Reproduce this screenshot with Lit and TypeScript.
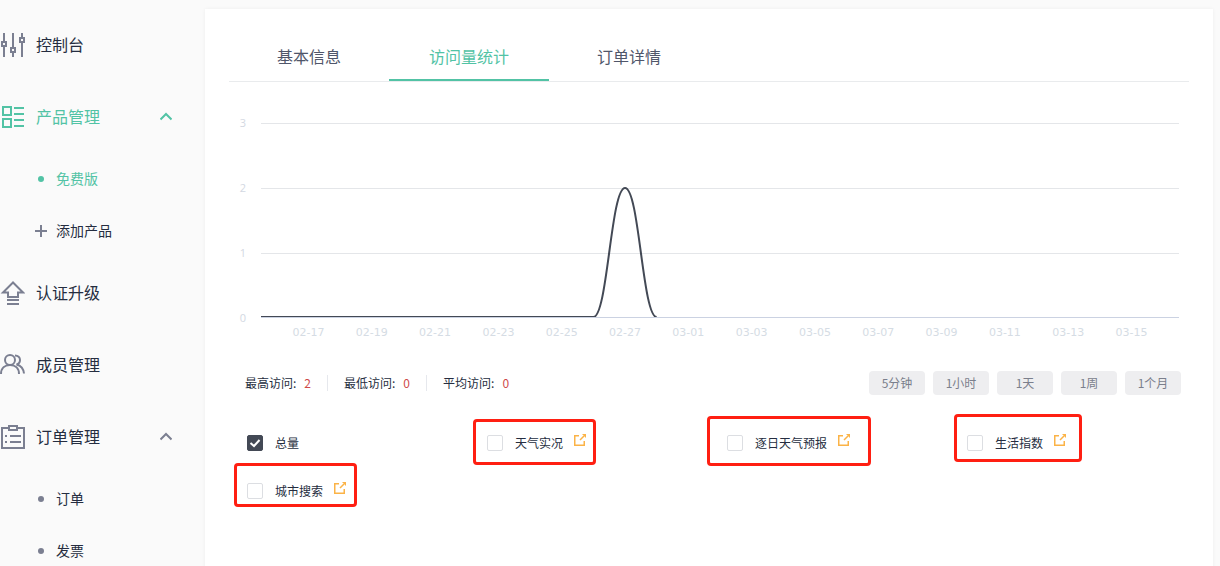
import { LitElement, html, css, svg, nothing } from "lit";
import { customElement, property, state } from "lit/decorators.js";
import { classMap } from "lit/directives/class-map.js";
import { styleMap } from "lit/directives/style-map.js";

const icons = {
  sliders: svg`<path d="M4 0v8.5M4 13.5V24M13 0v14.5M13 19.5V24M22 0v4.5M22 9.5V24"/><path d="M2 9h4v4H2zM11 15h4v4h-4zM20 5h4v4h-4z"/>`,
  list: svg`<path d="M3 2h8v8H3zM3 14h8v8H3zM14 3h10M14 9h10M14 15h10M14 21h10"/>`,
  upgrade: svg`<path d="M13 1.500 3 11.500h5V16h10v-4.500h5zM7 19h12M7 23h12"/>`,
  members: svg`<circle cx="10" cy="7" r="5"/><path d="M1 21c0-6 4-9 9-9s9 3 9 9M15 2.500c3 0 5 2 5 4.500s-1.500 4-3.500 4.500c4 1 7 4.500 7.500 9"/>`,
  clipboard: svg`<path d="M8 3H2v20h22V3h-6M9 1h8v4H9zM10 11h11M10 17h11M5 11h2M5 17h2"/>`,
};

type IconName = keyof typeof icons;

interface SubItem {
  label: string;
  marker: "dot" | "plus";
  active?: boolean;
}

interface MenuItem {
  label: string;
  icon: IconName;
  active?: boolean;
  children?: SubItem[];
}

const menu: MenuItem[] = [
  { label: "控制台", icon: "sliders" },
  {
    label: "产品管理",
    icon: "list",
    active: true,
    children: [
      { label: "免费版", marker: "dot", active: true },
      { label: "添加产品", marker: "plus" },
    ],
  },
  { label: "认证升级", icon: "upgrade" },
  { label: "成员管理", icon: "members" },
  {
    label: "订单管理",
    icon: "clipboard",
    children: [
      { label: "订单", marker: "dot" },
      { label: "发票", marker: "dot" },
    ],
  },
];

@customElement("side-menu")
export class SideMenu extends LitElement {
  static styles = css`
    :host {
      display: block;
    }
    .list {
      margin: 0;
      padding: 0;
      list-style: none;
    }
    .entry,
    .sub {
      box-sizing: border-box;
      width: 100%;
      display: flex;
      align-items: center;
      border: 0;
      background: none;
      color: #252d40;
      font-family: inherit;
      text-align: left;
      text-decoration: none;
      cursor: pointer;
    }
    .entry {
      height: 72px;
      padding: 0 33px 0 0;
      gap: 11px;
      font-size: 16px;
    }
    .sub {
      height: 52px;
      padding: 0 0 0 35px;
      gap: 9px;
      font-size: 14px;
    }
    .active {
      color: #52c3a5;
    }
    .label {
      flex: 1;
      padding-bottom: 2px;
    }
    .icon {
      width: 25px;
      height: 24px;
      fill: none;
      stroke: #7b7f91;
      stroke-width: 2;
    }
    .small {
      width: 12px;
      height: 12px;
      fill: none;
      stroke: #7b7f91;
      stroke-width: 2;
    }
    .dot {
      fill: #7b7f91;
      stroke: none;
    }
    .active .icon,
    .active .small {
      stroke: #52c3a5;
    }
    .active .dot {
      fill: #52c3a5;
    }
  `;

  @state() private closed = new Set<string>();

  private toggle(label: string) {
    const next = new Set(this.closed);
    if (!next.delete(label)) next.add(label);
    this.closed = next;
  }

  private renderSub(item: SubItem) {
    return html`<li>
      <a class=${classMap({ sub: true, active: !!item.active })} href="#">
        <svg class="small" viewBox="0 0 12 12" aria-hidden="true">
          ${item.marker === "dot"
            ? svg`<circle class="dot" cx="6" cy="6" r="3"/>`
            : svg`<path d="M0 6h12M6 0v12"/>`}
        </svg>
        <span class="label">${item.label}</span>
      </a>
    </li>`;
  }

  private renderItem(item: MenuItem) {
    const classes = classMap({ entry: true, active: !!item.active });
    const content = html`<svg class="icon" viewBox="0 0 25 24" aria-hidden="true">${icons[item.icon]}</svg>
      <span class="label">${item.label}</span>`;
    if (!item.children) {
      return html`<li><a class=${classes} href="#">${content}</a></li>`;
    }
    const open = !this.closed.has(item.label);
    return html`<li>
      <button class=${classes} type="button" aria-expanded=${open} @click=${() => this.toggle(item.label)}>
        ${content}
        <svg class="small" viewBox="0 0 12 12" aria-hidden="true">
          <path d=${open ? "M0.500 8.500 6 3 11.500 8.500" : "M0.500 3.500 6 9 11.500 3.500"} />
        </svg>
      </button>
      ${open ? html`<ul class="list">${item.children.map((c) => this.renderSub(c))}</ul>` : nothing}
    </li>`;
  }

  render() {
    return html`<nav><ul class="list">${menu.map((item) => this.renderItem(item))}</ul></nav>`;
  }
}

@customElement("visit-chart")
export class VisitChart extends LitElement {
  static styles = css`
    :host {
      display: block;
    }
    .chart {
      display: grid;
      grid-template-columns: 17px minmax(0, 1fr);
      column-gap: 15px;
      padding-right: 10px;
    }
    .values {
      display: flex;
      flex-direction: column;
      justify-content: space-between;
      margin: -8px 0;
      text-align: right;
      font: 11px/16px "Open Sans", sans-serif;
      color: #d3d8e2;
    }
    .plot {
      display: block;
      width: 100%;
      height: 195px;
      overflow: visible;
    }
    .grid,
    .axis,
    .curve {
      fill: none;
      vector-effect: non-scaling-stroke;
    }
    .grid {
      stroke: #e4e6e9;
    }
    .axis {
      stroke: #cbd2e2;
    }
    .curve {
      stroke: #434955;
      stroke-width: 2;
    }
    .dates {
      grid-column: 2;
      display: grid;
      grid-template-columns: 1fr repeat(14, minmax(0, 4fr)) 1fr;
      padding-top: 7px;
      font: 11px/16px "DejaVu Sans", sans-serif;
      color: #d5dce4;
      text-align: center;
      white-space: nowrap;
    }
    .dates::before {
      content: "";
    }
  `;

  @property({ attribute: false }) dates: string[] = [];

  render() {
    return html`<div class="chart">
      <div class="values">${[3, 2, 1, 0].map((v) => html`<span>${v}</span>`)}</div>
      <svg class="plot" viewBox="0 0 29 195" preserveAspectRatio="none" role="img" aria-label="访问量统计">
        <path class="grid" d="M0 0.500H29M0 65.500H29M0 130.500H29" />
        <path class="curve" d="M0 194H10.500C10.950 194 11.050 65 11.500 65S12.050 194 12.500 194" />
        <path class="axis" d="M0 194.500H29" />
      </svg>
      <div class="dates">${this.dates.map((d) => html`<span>${d}</span>`)}</div>
    </div>`;
  }
}

interface Option {
  label: string;
  checked?: boolean;
  link?: boolean;
  /** Highlight frame around the option, relative to its cell. */
  frame?: { left: number; top: number; width: number; height: number };
}

const options: Option[] = [
  { label: "总量", checked: true },
  { label: "天气实况", link: true, frame: { left: 4, top: 0, width: 123, height: 46 } },
  { label: "逐日天气预报", link: true, frame: { left: -2, top: -3, width: 164, height: 50 } },
  { label: "生活指数", link: true, frame: { left: 5, top: -5, width: 128, height: 48 } },
  { label: "城市搜索", link: true, frame: { left: 5, top: -4, width: 123, height: 44 } },
];

@customElement("app-root")
export class AppRoot extends LitElement {
  static styles = css`
    :host {
      display: grid;
      grid-template-columns: 205px minmax(0, 1fr);
      box-sizing: border-box;
      height: 100vh;
      overflow: hidden;
      padding: 9px 7px 0 0;
      background: #fafafa;
      color: #252d40;
      font-family: "Noto Sans CJK SC", sans-serif;
    }
    .card {
      padding: 24px 24px 0;
      background: #fff;
      box-shadow: 0 0 4px rgba(0, 0, 0, 0.05);
    }
    .tabs {
      display: flex;
      border-bottom: 1px solid #e9ebed;
    }
    .tab {
      box-sizing: border-box;
      width: 160px;
      height: 48px;
      padding: 0;
      border: 0;
      border-bottom: 2px solid transparent;
      background: none;
      color: #50566a;
      font: 16px/24px "Noto Sans CJK SC", sans-serif;
      cursor: pointer;
    }
    .selected {
      border-bottom-color: #52c3a5;
      color: #52c3a5;
    }
    .visits {
      padding-top: 41px;
    }
    .summary {
      display: flex;
      justify-content: space-between;
      align-items: center;
      padding: 30px 8px 24px 0;
      font-size: 12px;
      line-height: 16px;
    }
    .stats,
    .ranges {
      display: flex;
      margin: 0;
    }
    .stat {
      display: flex;
      gap: 8px;
      padding: 0 16px;
      border-right: 1px solid #e6e8ed;
    }
    .stat:last-child {
      border-right: 0;
    }
    .number {
      margin: 0;
      color: #cf4a4a;
    }
    .ranges {
      gap: 8px;
    }
    .range {
      width: 56px;
      height: 24px;
      padding: 0;
      border: 0;
      border-radius: 4px;
      background: #eeeef0;
      color: #7b7f8c;
      font: 12px/24px "Noto Sans CJK SC", sans-serif;
      cursor: pointer;
    }
    .options {
      display: grid;
      grid-template-columns: repeat(4, minmax(0, 1fr));
      margin: 0;
      padding: 0;
      list-style: none;
    }
    .option {
      position: relative;
      display: flex;
      align-items: center;
      gap: 11px;
      height: 48px;
      padding-left: 18px;
      font-size: 12px;
      line-height: 16px;
    }
    .check {
      display: flex;
      align-items: center;
      gap: 12px;
      cursor: pointer;
    }
    .box {
      display: grid;
    }
    .input,
    .tick {
      grid-area: 1 / 1;
      width: 16px;
      height: 16px;
    }
    .input {
      appearance: none;
      box-sizing: border-box;
      margin: 0;
      border: 1px solid #dcdee2;
      border-radius: 2px;
      background: #fff;
    }
    .input:checked {
      border-color: #434955;
      background: #434955;
    }
    .tick {
      fill: none;
      stroke: #fff;
      stroke-width: 2;
      pointer-events: none;
    }
    .link {
      display: flex;
      padding-bottom: 6px;
    }
    .open {
      width: 12px;
      height: 12px;
      fill: none;
      stroke: #fbb347;
      stroke-width: 1.5;
    }
    .tip {
      fill: #fbb347;
      stroke: none;
    }
    .frame {
      position: absolute;
      box-sizing: border-box;
      border: 3px solid #ff1f12;
      border-radius: 4px;
      pointer-events: none;
    }
  `;

  @state() private tab = "访问量统计";

  private renderTab(label: string) {
    const selected = this.tab === label;
    return html`<button
      class=${classMap({ tab: true, selected })}
      type="button"
      role="tab"
      aria-selected=${selected}
      @click=${() => (this.tab = label)}
    >${label}</button>`;
  }

  private renderOption(option: Option) {
    const f = option.frame;
    return html`<li class="option">
      <label class="check">
        <span class="box">
          <input class="input" type="checkbox" .checked=${!!option.checked} />
          <svg class="tick" viewBox="0 0 16 16" aria-hidden="true"><path d="M3.500 8 7 11 12.500 5" /></svg>
        </span>
        <span>${option.label}</span>
      </label>
      ${option.link
        ? html`<a class="link" href="#" aria-label=${option.label}>
            <svg class="open" viewBox="0 0 12 12" aria-hidden="true">
              <path d="M5 1.750H0.750v9.500h9.500V7M6 6l4-4" />
              <path class="tip" d="M8 0h4v4z" />
            </svg>
          </a>`
        : nothing}
      ${f
        ? html`<span
            class="frame"
            style=${styleMap({
              left: `${f.left}px`,
              top: `${f.top}px`,
              width: `${f.width}px`,
              height: `${f.height}px`,
            })}
          ></span>`
        : nothing}
    </li>`;
  }

  render() {
    const stats: [string, number][] = [["最高访问:", 2], ["最低访问:", 0], ["平均访问:", 0]];
    const dates = [
      "02-17", "02-19", "02-21", "02-23", "02-25", "02-27", "03-01",
      "03-03", "03-05", "03-07", "03-09", "03-11", "03-13", "03-15",
    ];
    return html`
      <side-menu></side-menu>
      <main class="card">
        <div class="tabs" role="tablist">
          ${["基本信息", "访问量统计", "订单详情"].map((t) => this.renderTab(t))}
        </div>
        <section class="visits">
          <visit-chart .dates=${dates}></visit-chart>
          <div class="summary">
            <dl class="stats">
              ${stats.map(([name, value]) => html`<div class="stat"><dt>${name}</dt><dd class="number">${value}</dd></div>`)}
            </dl>
            <div class="ranges">
              ${["5分钟", "1小时", "1天", "1周", "1个月"].map((r) => html`<button class="range" type="button">${r}</button>`)}
            </div>
          </div>
          <ul class="options">${options.map((o) => this.renderOption(o))}</ul>
        </section>
      </main>
    `;
  }
}
